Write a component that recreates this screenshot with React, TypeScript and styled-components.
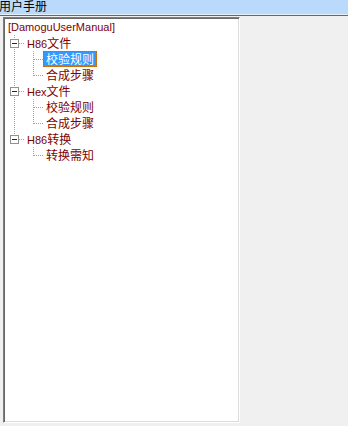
import React from "react";
import styled, { createGlobalStyle } from "styled-components";

const GlobalStyle = createGlobalStyle`
  html, body {
    margin: 0;
    padding: 0;
    background: #f0f0f0;
  }
  body {
    width: 348px;
    height: 426px;
    overflow: hidden;
    font-family: "Liberation Sans", "Noto Sans CJK SC", sans-serif;
  }
`;

const TitleBar = styled.div`
  height: 14px;
  background: #badafc;
  border-bottom: 1px solid #e6eef7;
  box-shadow: 0 1px 0 #5b6b7b;
  overflow: hidden;
`;

const Title = styled.div`
  margin: 0 0 0 -1px;
  font-family: "Noto Sans CJK SC", sans-serif;
  font-size: 12px;
  line-height: 12px;
  color: #000;
`;

const Tree = styled.div`
  box-sizing: border-box;
  width: 237px;
  height: 406px;
  margin: 2px 0 0 3px;
  padding: 1px 1px;
  background: #fff;
  border-top: 1px solid #7c7c7c;
  border-left: 1px solid #7c7c7c;
  border-right: 1px solid #fff;
  border-bottom: 1px solid #fff;
  box-shadow: inset 1px 1px 0 #696969, inset -1px -1px 0 #dcdcdc;
`;

const Row = styled.div`
  display: flex;
  align-items: stretch;
  height: 16px;
`;

const Label = styled.span<{ $selected?: boolean }>`
  box-sizing: border-box;
  height: 16px;
  padding: 0 2px;
  line-height: 14px;
  font-size: 11px;
  white-space: nowrap;
  color: ${(p) => (p.$selected ? "#fff" : "#800000")};
  background: ${(p) => (p.$selected ? "#3399ff" : "transparent")};
  border: 1px ${(p) => (p.$selected ? "dotted #c96a00" : "solid transparent")};
`;

const Cjk = styled.span`
  font-family: "Noto Sans CJK SC", sans-serif;
  font-size: 12px;
`;

type Vertical = "full" | "top" | "none";

const Gutter = ({
  vertical,
  branch,
  expander,
}: {
  vertical: Vertical;
  branch?: boolean;
  expander?: boolean;
}) => (
  <svg width={19} height={16} shapeRendering="crispEdges" style={{ flex: "none" }}>
    {vertical !== "none" && (
      <line
        x1={9.5}
        y1={0}
        x2={9.5}
        y2={vertical === "full" ? 16 : 9}
        stroke="#a0a0a0"
        strokeDasharray="1 1"
      />
    )}
    {branch && (
      <line x1={10} y1={8.5} x2={19} y2={8.5} stroke="#a0a0a0" strokeDasharray="1 1" />
    )}
    {expander && (
      <>
        <rect x={5.5} y={4.5} width={8} height={8} fill="#fff" stroke="#919191" />
        <line x1={7} y1={8.5} x2={12} y2={8.5} stroke="#800000" />
      </>
    )}
  </svg>
);

const Text = ({ value }: { value: string }) => {
  const runs = value.match(/[\u3000-\u9fff]+|[^\u3000-\u9fff]+/g) ?? [];
  return (
    <>
      {runs.map((r, i) =>
        /[\u3000-\u9fff]/.test(r) ? <Cjk key={i}>{r}</Cjk> : <span key={i}>{r}</span>
      )}
    </>
  );
};

const groups = [
  { name: "H86文件", children: ["校验规则", "合成步骤"] },
  { name: "Hex文件", children: ["校验规则", "合成步骤"] },
  { name: "H86转换", children: ["转换需知"] },
];

export default function App() {
  return (
    <>
      <GlobalStyle />
      <TitleBar>
        <Title>用户手册</Title>
      </TitleBar>
      <Tree>
        <Row>
          <Label>[DamoguUserManual]</Label>
        </Row>
        {groups.map((g, gi) => {
          const lastGroup = gi === groups.length - 1;
          return (
            <React.Fragment key={gi}>
              <Row>
                <Gutter vertical={lastGroup ? "top" : "full"} branch expander />
                <Label>
                  <Text value={g.name} />
                </Label>
              </Row>
              {g.children.map((c, ci) => (
                <Row key={ci}>
                  <Gutter vertical={lastGroup ? "none" : "full"} />
                  <Gutter vertical={ci === g.children.length - 1 ? "top" : "full"} branch />
                  <Label $selected={gi === 0 && ci === 0}>
                    <Text value={c} />
                  </Label>
                </Row>
              ))}
            </React.Fragment>
          );
        })}
      </Tree>
    </>
  );
}
